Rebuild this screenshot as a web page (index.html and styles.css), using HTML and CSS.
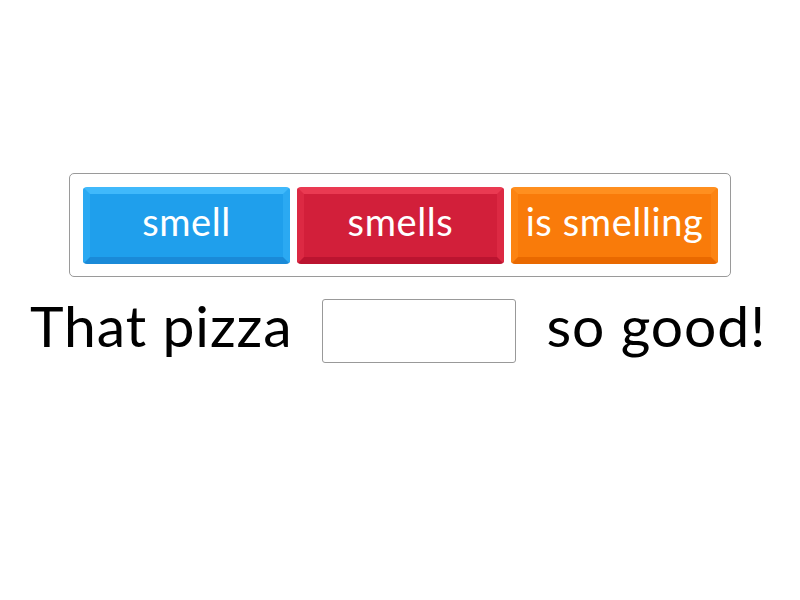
FILE: index.html
```html
<!DOCTYPE html>
<html>
<head>
<meta charset="utf-8">
<link rel="stylesheet" href="styles.css">
</head>
<body>
<div class="page">
  <div class="bank">
    <div class="tile blue">smell</div>
    <div class="tile red">smells</div>
    <div class="tile orange">is smelling</div>
  </div>
  <div class="sentence">
    <span class="word">That pizza</span>
    <span class="blank"></span>
    <span class="word">so good!</span>
  </div>
</div>
</body>
</html>
```
FILE: styles.css
```css
html, body {
  margin: 0;
  padding: 0;
  background: #ffffff;
}
.page {
  width: 800px;
  height: 600px;
  font-family: Lato, "Open Sans", sans-serif;
  display: flex;
  flex-direction: column;
  align-items: center;
  padding-top: 173px;
  box-sizing: border-box;
}
.bank {
  width: 662px;
  height: 104px;
  box-sizing: border-box;
  border: 1px solid #9a9a9a;
  border-radius: 5px;
  padding: 13px 12px 12px 13px;
  display: flex;
  gap: 7px;
}
.tile {
  flex: 1;
  height: 77px;
  box-sizing: border-box;
  border-radius: 4px;
  border-style: solid;
  border-width: 7px 7px 7px 7px;
  color: #ffffff;
  font-size: 38px;
  display: flex;
  align-items: center;
  justify-content: center;
  padding-bottom: 9px;
  letter-spacing: 0.6px;
}
.blue {
  background: #1f9fec;
  border-color: #40b9fb #2ba9f2 #1a8ad8 #2ba9f2;
}
.red {
  background: #d21f3a;
  border-color: #ea3a52 #dc2943 #bb1430 #dc2943;
}
.orange {
  background: #f97b0a;
  border-color: #ff8f1f #fc8412 #e96900 #fc8412;
}
.sentence {
  align-self: flex-start;
  margin-top: 22px;
  margin-left: 30px;
  display: flex;
  align-items: flex-start;
  height: 64px;
}
.word {
  font-size: 57px;
  color: #000000;
  line-height: 52px;
  letter-spacing: 0.9px;
}
.blank {
  display: block;
  width: 194px;
  height: 64px;
  box-sizing: border-box;
  border: 1px solid #999999;
  border-radius: 3px;
  margin: 0 30px 0 30px;
}
```
